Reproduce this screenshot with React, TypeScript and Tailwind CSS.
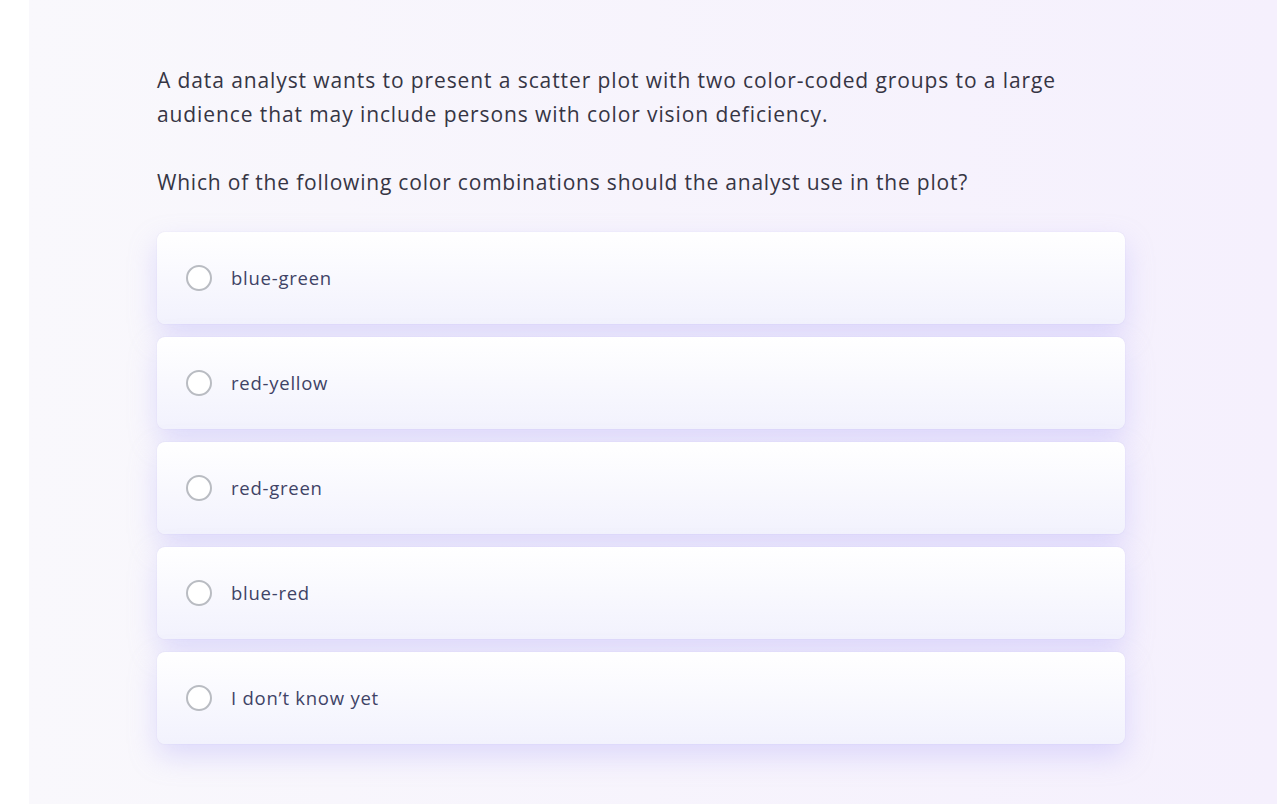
const options = ["blue-green", "red-yellow", "red-green", "blue-red", "I don’t know yet"];

function Option({ label }: { label: string }) {
  return (
    <label className="flex h-[92px] cursor-pointer items-center gap-[19px] rounded-lg bg-gradient-to-b from-white to-[#f2f2fd] pl-[29px] shadow-[0_0_1px_rgba(120,110,200,0.3),0_12px_28px_rgba(170,160,250,0.34)]">
      <span className="size-[26px] shrink-0 rounded-full border-2 border-[#b9bcc2] bg-white" />
      <span className="text-[18.5px] tracking-[0.75px] text-[#3f4366]">{label}</span>
    </label>
  );
}

export default function App() {
  return (
    <div className="flex min-h-[804px] bg-white font-['Open_Sans','Lato',sans-serif]">
      <div className="ml-[29px] flex-1 bg-gradient-to-r from-[#f9f8fc] to-[#f5f0fd] pt-[63px]">
        <div className="ml-[128px] w-[968px]">
          <p className="text-[21px] leading-[34px] tracking-[0.9px] text-[#363544]">
            A data analyst wants to present a scatter plot with two color-coded groups to a large
            <br />
            audience that may include persons with color vision deficiency.
          </p>
          <p className="mt-[34px] text-[21px] leading-[34px] tracking-[0.8px] text-[#363544]">
            Which of the following color combinations should the analyst use in the plot?
          </p>
          <div className="mt-[33px] flex flex-col gap-[13px]">
            {options.map((o) => (
              <Option key={o} label={o} />
            ))}
          </div>
        </div>
      </div>
    </div>
  );
}
